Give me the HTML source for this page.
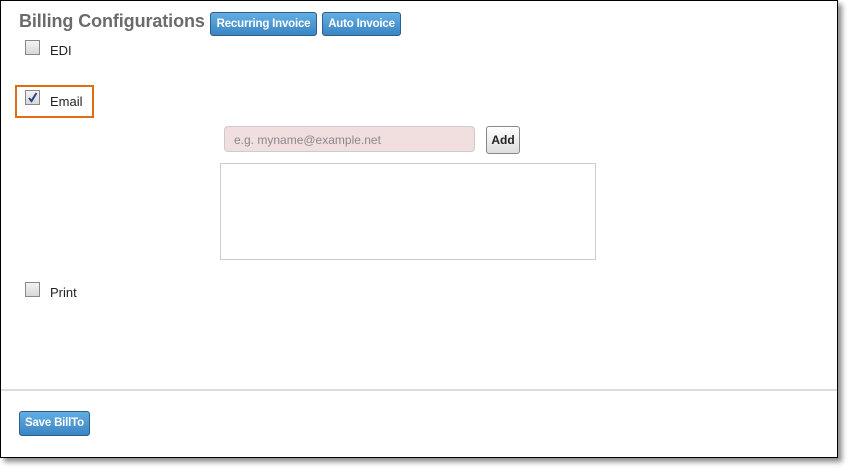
<!DOCTYPE html>
<html><head><style>
body{margin:0;width:849px;height:473px;background:#fff;font-family:"Liberation Sans",Arial,sans-serif;position:relative;overflow:hidden}
.frame{position:absolute;left:0;top:0;width:836px;height:456px;border:1px solid #000;background:#fff;box-shadow:4px 4px 5px rgba(0,0,0,.45)}
.a{position:absolute}
.btn{position:absolute;background:linear-gradient(#62aee3,#3a85c4);border:1px solid #2d5f8a;border-radius:3px;color:#fff;font-weight:bold;font-size:11.5px;text-align:center;box-sizing:border-box;letter-spacing:-0.2px}
.cb{position:absolute;width:15px;height:15px;border:1px solid #888;background:linear-gradient(#f2f2f2,#d8d8d8);box-sizing:border-box}
.lbl{position:absolute;font-size:13px;color:#222}
</style></head><body>
<div class="frame"></div>
<div class="a" style="left:19px;top:11px;font-size:18px;font-weight:bold;color:#6b6b6b;letter-spacing:-0.1px">Billing Configurations</div>
<div class="btn" style="left:210px;top:12px;width:107px;height:24px;line-height:22px">Recurring Invoice</div>
<div class="btn" style="left:322px;top:12px;width:79px;height:24px;line-height:22px">Auto Invoice</div>
<div class="cb" style="left:25px;top:40px"></div>
<div class="lbl" style="left:50px;top:43px">EDI</div>
<div class="a" style="left:15px;top:85px;width:79px;height:33px;border:2px solid #e26c12;box-sizing:border-box"></div>
<div class="cb" style="left:25px;top:90px"></div>
<svg class="a" style="left:26px;top:91px" width="13" height="13" viewBox="0 0 13 13"><path d="M3 7 L5.5 10 L10.5 2" stroke="#2b3f8c" stroke-width="2" fill="none"/></svg>
<div class="lbl" style="left:50px;top:94px">Email</div>
<div class="a" style="left:224px;top:126px;width:251px;height:26px;background:#f1dede;border:1px solid #ccc;border-radius:4px;box-sizing:border-box;font-size:12px;color:#8a8a8a;padding:6px 0 0 9px">e.g. myname@example.net</div>
<div class="a" style="left:486px;top:126px;width:34px;height:28px;border:1px solid #888;border-radius:3px;background:linear-gradient(#fff,#ddd);box-sizing:border-box;font-size:12px;font-weight:bold;text-align:center;line-height:26px;color:#222">Add</div>
<div class="a" style="left:220px;top:163px;width:376px;height:97px;border:1px solid #ccc;box-sizing:border-box"></div>
<div class="cb" style="left:25px;top:282px"></div>
<div class="lbl" style="left:50px;top:285px">Print</div>
<div class="a" style="left:1px;top:389px;width:836px;height:2px;background:#ddd"></div>
<div class="btn" style="left:19px;top:411px;width:71px;height:25px;line-height:23px">Save BillTo</div>
</body></html>
